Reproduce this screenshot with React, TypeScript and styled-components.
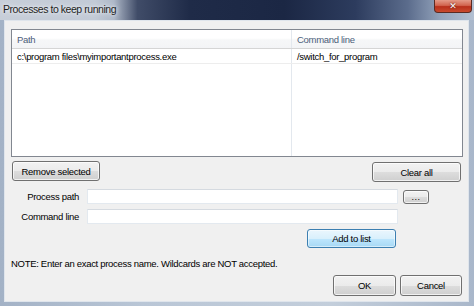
import React from 'react'
import styled, { createGlobalStyle } from 'styled-components'

const UI_FONT = '"Liberation Sans", Arial, sans-serif'

const Global = createGlobalStyle`
  html, body { margin: 0; padding: 0; background: #ffffff; }
  body { font-family: ${UI_FONT}; font-size: 9.5px; letter-spacing: -0.3px; color: #000; }
`

const Window = styled.div`
  width: 474px;
  height: 306px;
  display: flex;
  flex-direction: column;
  background: linear-gradient(90deg, #a3b2c6 0%, #b9c6d6 30%, #c3cedb 70%, #a9b7ca 100%);
  overflow: hidden;
`

const TitleBar = styled.div`
  height: 20px;
  position: relative;
  display: flex;
  align-items: flex-start;
  background: linear-gradient(90deg, #c7ced9 0%, #c2cad6 20%, #aeb8c8 24%, #404c68 29%, #1f2b48 40%, #1b2744 60%, #2d3c5e 75%, #5b6c8c 86%, #93a3bb 93%, #b3c0d2 100%);
`

const Title = styled.span`
  margin: 3px 0 0 3px;
  font-size: 10.5px;
  letter-spacing: -0.45px;
  color: #1e1e1e;
  text-shadow: 0 0 6px #e8ecf2, 0 0 3px #f0f3f7;
`

const CloseButton = styled.div`
  position: absolute;
  right: 2px;
  top: 0;
  width: 38px;
  height: 13px;
  box-sizing: border-box;
  border: 1px solid #5b2a22;
  border-top: none;
  border-radius: 0 0 4px 4px;
  background: linear-gradient(180deg, #e49a88 0%, #d2654f 45%, #b8301b 55%, #c94a2e 100%);
  display: flex;
  align-items: center;
  justify-content: center;
  color: #fff;
  font-family: "DejaVu Sans", sans-serif;
  font-weight: bold;
  font-size: 9px;
  letter-spacing: 0;
  line-height: 1;
  text-shadow: 0 0 2px #3a0c06;
`

const Client = styled.div`
  margin: 0 5px 4px 4px;
  flex: 1;
  background: #f0f0f0;
  display: flex;
  flex-direction: column;
  border: 1px solid #dfe5ec;
  box-sizing: border-box;
`

const ListBox = styled.div`
  margin: 8px 0 0 6px;
  width: 452px;
  height: 128px;
  box-sizing: border-box;
  border: 1px solid #828790;
  background: #fff;
  display: flex;
  flex-direction: column;
`

const Row = styled.div<{ $header?: boolean }>`
  display: grid;
  grid-template-columns: 280px 1fr;
  height: ${p => (p.$header ? 18 : 14)}px;
  border-bottom: 1px solid ${p => (p.$header ? '#d5d5d5' : '#ededed')};
  background: ${p => (p.$header ? 'linear-gradient(180deg, #ffffff 0%, #ffffff 45%, #f6f7f8 55%, #f3f4f6 100%)' : '#fff')};
  flex: none;
`

const Fill = styled.div`
  flex: 1;
  display: grid;
  grid-template-columns: 280px 1fr;
`

const Cell = styled.div<{ $header?: boolean }>`
  display: flex;
  align-items: center;
  padding-left: 5px;
  border-right: 1px solid #e3e8ee;
  white-space: nowrap;
  overflow: hidden;
  color: ${p => (p.$header ? '#4c607a' : '#000')};
  &:last-child { border-right: none; }
`

const ButtonRow = styled.div`
  margin: 4px 7px 0 7px;
  display: flex;
  justify-content: space-between;
  align-items: flex-start;
`

const Button = styled.button<{ $w: number; $h: number; $def?: boolean }>`
  width: ${p => p.$w}px;
  height: ${p => p.$h}px;
  padding: 0;
  box-sizing: border-box;
  border: 1px solid ${p => (p.$def ? '#3c7fb1' : '#707070')};
  border-radius: 3px;
  font-family: ${UI_FONT};
  font-size: 9.5px;
  letter-spacing: -0.3px;
  color: #000;
  background: ${p =>
    p.$def
      ? 'linear-gradient(180deg, #eaf6fd 0%, #d9f0fc 50%, #bee6fd 51%, #a7d9f5 100%)'
      : 'linear-gradient(180deg, #f2f2f2 0%, #ebebeb 50%, #dddddd 51%, #cfcfcf 100%)'};
  box-shadow: inset 0 0 0 1px ${p => (p.$def ? 'rgba(255,255,255,0.5)' : 'rgba(255,255,255,0.7)')};
`

const Form = styled.div`
  margin-top: 7px;
  display: grid;
  grid-template-columns: 74px 311px 26px;
  column-gap: 8px;
  row-gap: 5px;
  align-items: center;
`

const Label = styled.label`
  text-align: right;
  white-space: nowrap;
  color: #000;
`

const Input = styled.div`
  height: 15px;
  box-sizing: border-box;
  background: #fff;
  border: 1px solid #e3e9ef;
  border-top-color: #d5dae0;
`

const Browse = styled(Button)`
  margin-left: -3px;
  margin-top: 1px;
  font-size: 9px;
  line-height: 1;
  letter-spacing: 0.5px;
`

const AddRow = styled.div`
  margin: 5px 0 0 302px;
`

const Note = styled.div`
  margin: 10px 0 0 6px;
  white-space: nowrap;
`

const Footer = styled.div`
  margin: 6px 6px 0 0;
  display: flex;
  justify-content: flex-end;
  gap: 4px;
`

export default function App() {
  return (
    <>
      <Global />
      <Window>
        <TitleBar>
          <Title>Processes to keep running</Title>
          <CloseButton>✕</CloseButton>
        </TitleBar>
        <Client>
          <ListBox>
            <Row $header>
              <Cell $header>Path</Cell>
              <Cell $header>Command line</Cell>
            </Row>
            <Row>
              <Cell>c:\program files\myimportantprocess.exe</Cell>
              <Cell>/switch_for_program</Cell>
            </Row>
            <Fill>
              <Cell />
              <Cell />
            </Fill>
          </ListBox>
          <ButtonRow>
            <Button $w={88} $h={20}>Remove selected</Button>
            <Button $w={89} $h={20} style={{ marginTop: 1 }}>Clear all</Button>
          </ButtonRow>
          <Form>
            <Label>Process path</Label>
            <Input />
            <Browse $w={26} $h={14}>...</Browse>
            <Label>Command line</Label>
            <Input />
            <span />
          </Form>
          <AddRow>
            <Button $w={89} $h={19} $def>Add to list</Button>
          </AddRow>
          <Note>NOTE: Enter an exact process name. Wildcards are NOT accepted.</Note>
          <Footer>
            <Button $w={63} $h={21}>OK</Button>
            <Button $w={62} $h={21}>Cancel</Button>
          </Footer>
        </Client>
      </Window>
    </>
  )
}
